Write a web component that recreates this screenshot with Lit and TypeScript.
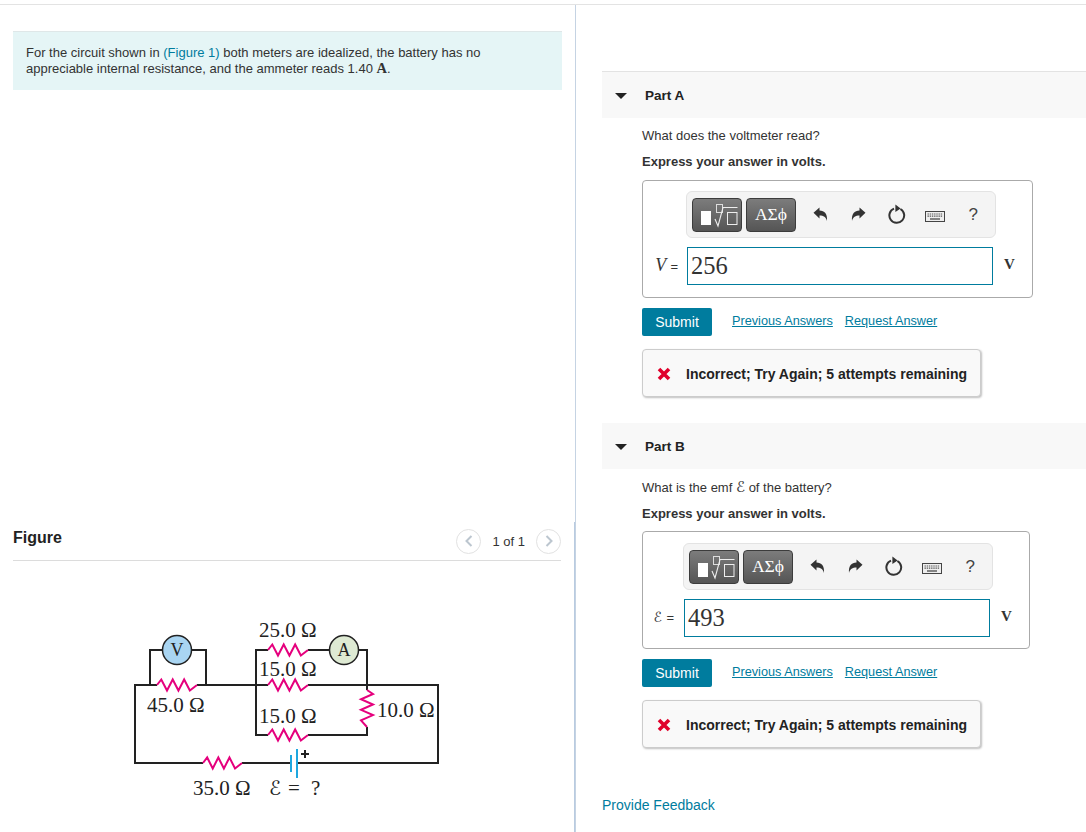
import { LitElement, html, css, svg } from "lit";
import { customElement } from "lit/decorators.js";

const SCRIPT_E = "\u2130";

function hRes(x0: number, x1: number, y: number) {
  const n = 6;
  const step = (x1 - x0) / (n + 1);
  let d = `M${x0} ${y}`;
  for (let i = 0; i < n; i++) {
    d += ` L${x0 + step * (i + 0.75)} ${y + (i % 2 === 0 ? -5.5 : 5.5)}`;
  }
  d += ` L${x1} ${y}`;
  return svg`<path class="res" d=${d}></path>`;
}

function vRes(x: number, y0: number, y1: number) {
  const n = 6;
  const step = (y1 - y0) / (n + 1);
  let d = `M${x} ${y0}`;
  for (let i = 0; i < n; i++) {
    d += ` L${x + (i % 2 === 0 ? 6 : -6)} ${y0 + step * (i + 0.75)}`;
  }
  d += ` L${x} ${y1}`;
  return svg`<path class="res" d=${d}></path>`;
}

@customElement("math-toolbar")
class MathToolbar extends LitElement {
  static styles = css`
    :host { display: block; }
    .bar {
      width: 310px; height: 47px; box-sizing: border-box;
      background: #f4f4f4; border: 1px solid #e3e3e3; border-radius: 6px;
      display: flex; align-items: center; padding-left: 5px;
    }
    .btn {
      width: 50px; height: 34px; box-sizing: border-box; flex: none;
      border: 1px solid #3c3c3c; border-radius: 4px;
      background: linear-gradient(#7c7c7c, #555555);
      display: flex; align-items: center; justify-content: center;
      color: #fff; margin-right: 4px;
      font: 17.5px "Liberation Serif", serif;
    }
    .tools { display: flex; align-items: center; margin-left: 1px; }
    .tool { width: 38.3px; display: flex; justify-content: center; align-items: center; height: 30px; flex: none; }
    .kbd svg { margin-top: 3px; }
    .reset svg { margin-top: -1px; }
    .help { font: 17px "Liberation Sans", sans-serif; color: #444; }
  `;
  render() {
    return html`<div class="bar">
      <div class="btn">
        <svg width="44" height="30" viewBox="0 0 44 30">
          <rect x="6" y="11" width="10" height="14" fill="#fff"></rect>
          <rect x="21.5" y="4.5" width="6" height="8" fill="none" stroke="#ddd" stroke-width="1"></rect>
          <path d="M20 19 L23 26 L28 7.5 H42.5" fill="none" stroke="#eee" stroke-width="1.1"></path>
          <rect x="32.5" y="12.5" width="9.5" height="12" fill="none" stroke="#eee" stroke-width="1"></rect>
        </svg>
      </div>
      <div class="btn">ΑΣϕ</div>
      <div class="tools">
        <div class="tool">
          <svg width="15" height="15" viewBox="0 0 15 15">
            <path d="M0.5 5.8 L6.5 0.5 L6.5 3.6 C11.5 3.6 14.6 7 14 14 C13 10.2 10.6 8.6 6.5 8.6 L6.5 11.4 Z" fill="#333"></path>
          </svg>
        </div>
        <div class="tool">
          <svg width="15" height="15" viewBox="0 0 15 15">
            <path d="M14.5 5.8 L8.5 0.5 L8.5 3.6 C3.5 3.6 0.4 7 1 14 C2 10.2 4.4 8.6 8.5 8.6 L8.5 11.4 Z" fill="#333"></path>
          </svg>
        </div>
        <div class="tool reset">
          <svg width="18" height="20" viewBox="0 0 18 20">
            <path d="M6 4.6 A7.4 7.4 0 1 0 12.4 5" fill="none" stroke="#333" stroke-width="2"></path>
            <path d="M7.4 0.4 L12.6 4.4 L7.4 8 Z" fill="#333"></path>
          </svg>
        </div>
        <div class="tool kbd">
          <svg width="20" height="11" viewBox="0 0 20 11">
            <rect x="0.5" y="0.5" width="19" height="10" fill="#eee" stroke="#444"></rect>
            <path d="M2.5 3 H17.5 M2.5 5.2 H17.5" stroke="#555" stroke-width="1.2" stroke-dasharray="1.4 0.8"></path>
            <path d="M5 8 H15" stroke="#555" stroke-width="1.4"></path>
          </svg>
        </div>
        <div class="tool help">?</div>
      </div>
    </div>`;
  }
}

@customElement("app-root")
export class AppRoot extends LitElement {
  static styles = css`
    :host {
      display: block; width: 1086px; height: 832px; overflow: hidden;
      font: 13px/16px "Liberation Sans", Arial, sans-serif; color: #333;
      background: #fff;
    }
    * { box-sizing: border-box; }
    .page {
      margin-top: 4px; border-top: 1px solid #e3e3e3; height: 828px;
      display: flex;
    }
    .left { width: 575px; flex: none; display: flex; flex-direction: column; }
    .right { flex: 1; border-left: 1px solid #c5d3e3; padding: 66px 0 0 26px; }
    .intro {
      margin: 26px 13px 0; height: 59px; background: #e5f5f6;
      border-top: 1px solid #dfe7e8; padding: 13px 13px 0;
      font-size: 13px; line-height: 16px; white-space: nowrap;
    }
    .intro .unit { font-family: "Liberation Serif", serif; font-weight: bold; font-size: 14.5px; line-height: 0; }
    .link { color: #007c9e; }
    .figure {
      margin-top: 432px; flex: 1; padding: 0 13px;
      border-right: 1px solid #b9cbe0;
    }
    .fig-head {
      height: 39px; border-bottom: 1px solid #dcdcdc; display: flex; align-items: center;
      justify-content: space-between;
    }
    .fig-title { font-size: 16px; font-weight: bold; color: #222; position: relative; top: -3px; }
    .pager { display: flex; align-items: center; gap: 11px; font-size: 13px; }
    .pager span { padding-top: 2px; }
    .round {
      width: 25px; height: 25px; border-radius: 50%; border: 1px solid #e2e2e2;
      display: flex; align-items: center; justify-content: center; background: #fff;
    }
    .circuit { display: block; margin: 49px 0 0 107px; }
    .wire { fill: none; stroke: #222; stroke-width: 2; }
    .res { fill: none; stroke: #e5007d; stroke-width: 2; stroke-linejoin: miter; }
    .cell { stroke: #1ea7df; stroke-width: 2; }
    .lbl { font: 21px "Liberation Serif", serif; fill: #222; }
    .script { font: 20px "DejaVu Sans", serif; fill: #222; }
    .meter { font: 18px "Liberation Serif", serif; fill: #222; text-anchor: middle; }

    .part-head {
      background: #f8f8f8; display: flex; align-items: center;
      padding: 2px 0 0 13px; font-size: 13.5px; font-weight: bold; color: #222;
      box-sizing: content-box; height: 44px;
    }
    .part-head.first { border-top: 1px solid #e3e3e3; }
    .tri { width: 0; height: 0; border-left: 6px solid transparent; border-right: 6px solid transparent; border-top: 6px solid #222; margin-right: 18px; }
    .body { padding-left: 40px; }
    .q { font-size: 13px; line-height: 16px; margin-top: 10px; height: 16px; white-space: nowrap; }
    .b .q { margin-top: 11px; }
    .q .e { font-family: "DejaVu Sans", serif; font-size: 15px; line-height: 0; }
    .ex { font-size: 13px; font-weight: bold; line-height: 16px; margin-top: 10px; }
    .box {
      margin-top: 10px; height: 118px; border: 1px solid #aaa; border-radius: 4px; padding-top: 10px;
    }
    .a .box { width: 391px; }
    .b .box { width: 388px; margin-top: 9px; padding-top: 11px; }
    .a math-toolbar { margin-left: 43px; }
    .b math-toolbar { margin-left: 40px; }
    .row { display: flex; align-items: center; margin-top: 9px; height: 38px; }
    .var { font: italic 18px/20px "Liberation Serif", serif; text-align: right; flex: none; white-space: nowrap; position: relative; top: -1px; }
    .var span { font: 13px "Liberation Sans", sans-serif; }
    .a .var { width: 35px; margin-right: 9px; }
    .b .var { width: 31px; margin-right: 10px; font: 14px/20px "DejaVu Sans", serif; }
    .input {
      width: 306px; height: 38px; border: 1px solid #007c9e; padding: 2px 0 0 3px;
      font: 24.5px "Liberation Serif", serif; color: #333; line-height: 32px;
    }
    .u { font: bold 15px "Liberation Serif", serif; margin-left: 11px; position: relative; top: -2px; }
    .actions { display: flex; align-items: center; margin-top: 10px; height: 28px; }
    .submit {
      width: 70px; height: 28px; background: #007c9e; color: #fff; border-radius: 2px;
      display: flex; align-items: center; justify-content: center; font-size: 14px;
    }
    .actions a { color: #007c9e; text-decoration: underline; font-size: 12.7px; margin-left: 20px; position: relative; top: -1px; }
    .actions a + a { margin-left: 12px; }
    .fb {
      margin-top: 13px; width: 339px; height: 48px; background: #f9f9f9; border: 1px solid #ccc;
      border-radius: 4px; box-shadow: 1px 1px 2px rgba(0,0,0,0.25);
      display: flex; align-items: center; padding: 2px 0 0 14px;
      font-size: 14px; font-weight: bold; color: #222; white-space: nowrap;
    }
    .fb svg { margin-right: 15px; flex: none; }
    .b-wrap { margin-top: 26px; }
    .feedback { display: block; color: #007c9e; font-size: 14px; margin-top: 49px; }
  `;

  private part(
    cls: string,
    title: string,
    question: unknown,
    varName: string,
    value: string,
    first: boolean
  ) {
    return html`<section class=${cls}>
      <div class="part-head ${first ? "first" : ""}"><span class="tri"></span>${title}</div>
      <div class="body">
        <div class="q">${question}</div>
        <div class="ex">Express your answer in volts.</div>
        <div class="box">
          <math-toolbar></math-toolbar>
          <div class="row">
            <div class="var">${varName} <span>=</span></div>
            <div class="input">${value}</div>
            <div class="u">V</div>
          </div>
        </div>
        <div class="actions">
          <div class="submit">Submit</div>
          <a>Previous Answers</a><a>Request Answer</a>
        </div>
        <div class="fb">
          <svg width="14" height="14" viewBox="0 0 14 14">
            <path d="M2 2 L12 12 M12 2 L2 12" stroke="#e0002b" stroke-width="3.6"></path>
          </svg>
          Incorrect; Try Again; 5 attempts remaining
        </div>
      </div>
    </section>`;
  }

  render() {
    return html`<div class="page">
      <div class="left">
        <div class="intro">
          For the circuit shown in <span class="link">(Figure 1)</span> both meters are idealized, the battery has no<br />
          appreciable internal resistance, and the ammeter reads 1.40 <span class="unit">A</span>.
        </div>
        <div class="figure">
          <div class="fig-head">
            <div class="fig-title">Figure</div>
            <div class="pager">
              <div class="round">
                <svg width="10" height="14" viewBox="0 0 10 14"><path d="M7.5 2 L2.5 7 L7.5 12" fill="none" stroke="#bcc6cf" stroke-width="2"></path></svg>
              </div>
              <span>1 of 1</span>
              <div class="round">
                <svg width="10" height="14" viewBox="0 0 10 14"><path d="M2.5 2 L7.5 7 L2.5 12" fill="none" stroke="#bcc6cf" stroke-width="2"></path></svg>
              </div>
            </div>
          </div>
          <svg class="circuit" width="330" height="200" viewBox="0 0 330 200">
            <path class="wire" d="M37 75 H15 V153 H83 M122 153 H171 M177 153 H318 V75 H188 M148 75 H77"></path>
            <path class="wire" d="M30 75 V40 H43 M71 40 H86 V75"></path>
            <path class="wire" d="M136 75 V125 H148 M188 125 H247 V117 M247 80 V40 H239 M210 40 H188 M148 40 H136 V75"></path>
            ${hRes(37, 77, 75)}
            ${hRes(148, 188, 40)}
            ${hRes(148, 188, 75)}
            ${hRes(148, 188, 125)}
            ${hRes(83, 122, 153)}
            ${vRes(247, 80, 117)}
            <line class="cell" x1="171" y1="145" x2="171" y2="162"></line>
            <line class="cell" x1="177" y1="139" x2="177" y2="168"></line>
            <path d="M181 144 H189 M185 140 V148" stroke="#222" stroke-width="2"></path>
            <circle cx="57" cy="40" r="14.5" fill="#a9d5f2" stroke="#222" stroke-width="1.5"></circle>
            <text class="meter" x="57" y="46">V</text>
            <circle cx="224" cy="40" r="14.5" fill="#deead3" stroke="#222" stroke-width="1.5"></circle>
            <text class="meter" x="224" y="46">A</text>
            <text class="lbl" x="139" y="27">25.0 Ω</text>
            <text class="lbl" x="139" y="66">15.0 Ω</text>
            <text class="lbl" x="139" y="113">15.0 Ω</text>
            <text class="lbl" x="27" y="102">45.0 Ω</text>
            <text class="lbl" x="257" y="107">10.0 Ω</text>
            <text class="lbl" x="73" y="185">35.0 Ω</text>
            <text class="script" x="149" y="185">${SCRIPT_E}</text>
            <text class="lbl" x="168" y="185">=</text>
            <text class="lbl" x="191" y="185">?</text>
          </svg>
        </div>
      </div>
      <div class="right">
        ${this.part("a", "Part A", html`What does the voltmeter read?`, "V", "256", true)}
        <div class="b-wrap">
          ${this.part(
            "b",
            "Part B",
            html`What is the emf <span class="e">${SCRIPT_E}</span> of the battery?`,
            SCRIPT_E,
            "493",
            false
          )}
        </div>
        <a class="feedback">Provide Feedback</a>
      </div>
    </div>`;
  }
}

void MathToolbar;
